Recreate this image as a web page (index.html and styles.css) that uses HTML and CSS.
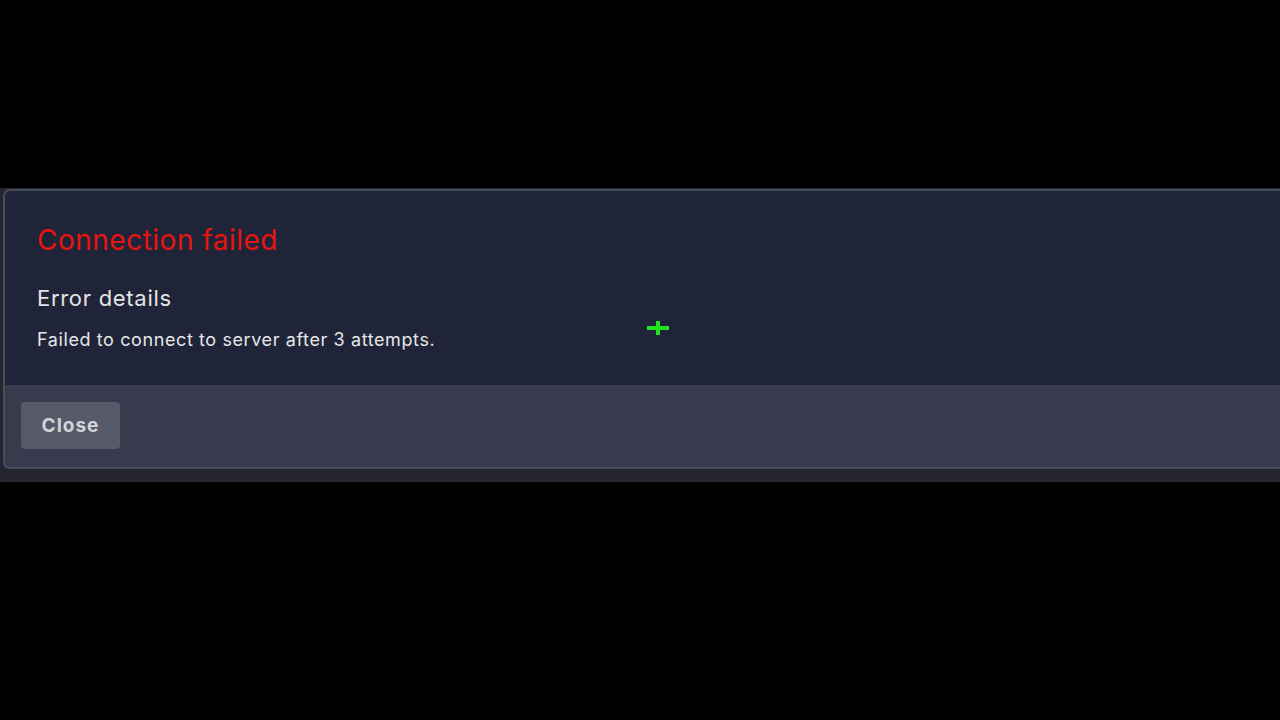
FILE: index.html
```html
<!DOCTYPE html>
<html>
<head>
<meta charset="utf-8">
<link rel="stylesheet" href="styles.css">
</head>
<body>
<div class="page">
  <div class="backdrop">
    <div class="modal">
      <div class="modal-body">
        <h1 class="title">Connection failed</h1>
        <h2 class="subtitle">Error details</h2>
        <p class="message">Failed to connect to server after 3 attempts.</p>
      </div>
      <div class="modal-footer">
        <button class="btn">Close</button>
      </div>
    </div>
  </div>
  <div class="cursor"><span class="cursor-h"></span><span class="cursor-v"></span></div>
</div>
</body>
</html>
```
FILE: styles.css
```css
html, body {
  margin: 0;
  padding: 0;
  background: #000;
  width: 1280px;
  height: 720px;
  overflow: hidden;
  font-family: "Inter", "Noto Sans", sans-serif;
}
.page {
  position: relative;
  padding-top: 188px;
}
.backdrop {
  background: #25262f;
  height: 294px;
  box-sizing: border-box;
  padding: 1px 0 0 3px;
}
.modal {
  border: 2px solid #4a4d5d;
  border-right: none;
  border-radius: 7px 0 0 7px;
  background: #1f2438;
  overflow: hidden;
}
.modal-body {
  height: 194px;
  box-sizing: border-box;
  padding: 32px 32px 0 32px;
}
.title {
  margin: 0;
  color: #e8140f;
  font-size: 28px;
  font-weight: 400;
  line-height: 34px;
  letter-spacing: 0.5px;
}
.subtitle {
  margin: 28px 0 0 0;
  color: #e4e4e6;
  font-size: 22px;
  font-weight: 400;
  line-height: 26px;
  letter-spacing: 0.7px;
}
.message {
  margin: 18px 0 0 0;
  color: #e6e6e8;
  font-size: 18px;
  line-height: 22px;
  letter-spacing: 0.6px;
}
.modal-footer {
  background: #383a4d;
  height: 82px;
  box-sizing: border-box;
  padding: 17px 16px;
}
.btn {
  background: #575a69;
  color: #d4d4d8;
  border: none;
  border-radius: 4px;
  width: 99px;
  height: 47px;
  font-family: "Inter", "Noto Sans", sans-serif;
  font-size: 19px;
  font-weight: 700;
  letter-spacing: 1px;
}
.cursor {
  position: absolute;
  left: 647px;
  top: 321px;
  width: 22px;
  height: 14px;
}
.cursor-h {
  position: absolute;
  left: 0;
  top: 5px;
  width: 22px;
  height: 4px;
  background: #1ee61e;
}
.cursor-v {
  position: absolute;
  left: 9px;
  top: 0;
  width: 4px;
  height: 14px;
  background: #1ee61e;
}
```
